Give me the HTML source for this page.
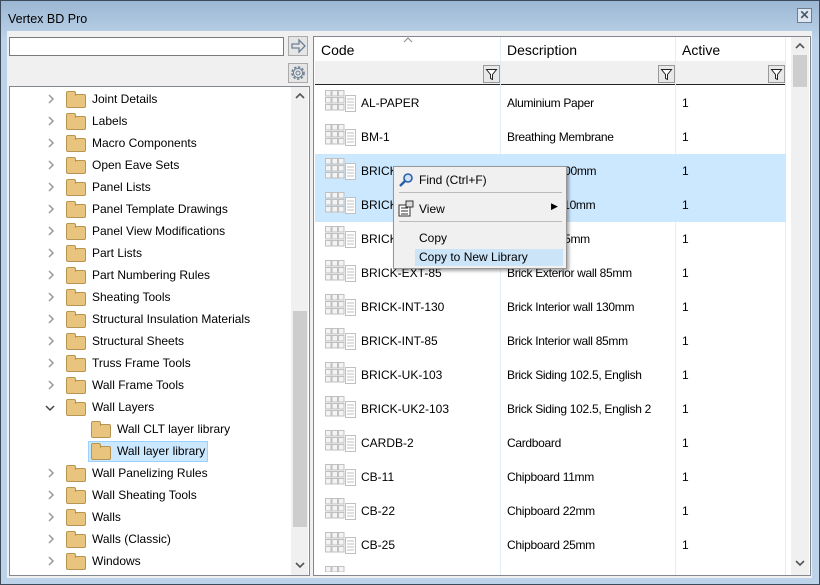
<!DOCTYPE html>
<html><head><meta charset="utf-8"><style>
*{box-sizing:border-box;margin:0;padding:0}
body{width:820px;height:585px;overflow:hidden;font-family:"Liberation Sans",sans-serif;font-size:12px;color:#000;position:relative;background:#bcd3ea}
.abs{position:absolute}
#win{left:0;top:0;width:820px;height:585px;border:1px solid #3c4a5a;background:linear-gradient(#9cb7d3,#bdd3ea 40px,#bdd3ea)}
#title{left:8px;top:12px;font-size:12.5px;color:#000}
#close{left:797px;top:8px;width:15px;height:15px;border:1px solid #6d7d90;background:#dfe8f2;font-size:12px;line-height:12px;text-align:center;color:#4a5868;font-weight:bold}
#body{left:7px;top:31px;width:805px;height:547px;background:#f0f0f0}
.btn{width:20px;height:20px;border:1px solid #aaa;background:#e5e5e5}
.tree{left:9px;top:86px;width:301px;height:490px;border:1px solid #828790;background:#fff}
.row{position:absolute;height:22px;line-height:22px;font-size:12px;white-space:nowrap}
.chev{position:absolute}
.fold{position:absolute;width:20px;height:14px;background:#e8c47e;border:1px solid #b79450;border-radius:2px}
.fold:before{content:"";position:absolute;left:-1px;top:-4px;width:8px;height:4px;background:#e8c47e;border:1px solid #b79450;border-bottom:none;border-radius:2px 2px 0 0}
.grid{left:313px;top:36px;width:498px;height:540px;border:1px solid #828790;background:#fff}
.g{position:absolute;font-size:12px;white-space:nowrap}
.filt{position:absolute;width:17px;height:18px;border:1px solid #999;background:#e8e8e8}
.menu{left:393px;top:166px;width:174px;height:103px;background:#f0f0f0;border:1px solid #979797;box-shadow:2px 2px 3px rgba(0,0,0,.35)}
</style></head><body>
<div id="win" class="abs"></div>
<div id="title" class="abs">Vertex BD Pro</div>
<div id="close" class="abs">✕</div>
<div id="body" class="abs"></div>
<div class="abs" style="left:9px;top:37px;width:275px;height:19px;border:1px solid #7a7a7a;background:#fff"></div>
<div class="abs btn" style="left:288px;top:36px"><svg width="18" height="18" style="position:absolute;left:0;top:0"><path d="M3 7h7V3l6 6-6 6v-4H3z" fill="none" stroke="#6d7f92" stroke-width="1.3"/></svg></div>
<div class="abs btn" style="left:288px;top:63px"><svg width="18" height="18" style="position:absolute;left:0;top:0"><circle cx="9" cy="9" r="6" fill="none" stroke="#6d7f92" stroke-width="1.6" stroke-dasharray="2.4 1.6"/><circle cx="9" cy="9" r="4.6" fill="none" stroke="#6d7f92" stroke-width="1"/><circle cx="9" cy="9" r="2" fill="none" stroke="#6d7f92" stroke-width="1"/></svg></div>

<div class="abs tree">
<div class="abs" style="left:281px;top:0;width:17px;height:488px;background:#f0f0f0"></div>
<div class="abs" style="left:283px;top:224px;width:14px;height:216px;background:#cdcdcd"></div>
<svg class="abs" style="left:285px;top:5px" width="10" height="8"><path d="M1 6l4-4 4 4" fill="none" stroke="#555" stroke-width="1.6"/></svg>
<svg class="abs" style="left:285px;top:474px" width="10" height="8"><path d="M1 2l4 4 4-4" fill="none" stroke="#555" stroke-width="1.6"/></svg>
</div>

<div id="tree"></div>

<div class="abs grid">
<div class="abs" style="left:1px;top:24px;width:471px;height:24px;background:#f0f0f0;border-bottom:1px solid #222"></div>
<div class="abs" style="left:186px;top:0;width:1px;height:538px;background:#e4edf6"></div>
<div class="abs" style="left:361px;top:0;width:1px;height:538px;background:#e4edf6"></div>
<div class="abs" style="left:471px;top:0;width:1px;height:538px;background:#e4edf6"></div>
<div class="abs" style="left:1px;top:117px;width:471px;height:68px;background:#cce8ff"></div>
<div class="abs" style="left:477px;top:0;width:18px;height:538px;background:#f0f0f0"></div>
<div class="abs" style="left:479px;top:18px;width:14px;height:32px;background:#cdcdcd"></div>
<svg class="abs" style="left:481px;top:5px" width="10" height="8"><path d="M1 6l4-4 4 4" fill="none" stroke="#555" stroke-width="1.6"/></svg>
<svg class="abs" style="left:481px;top:522px" width="10" height="8"><path d="M1 2l4 4 4-4" fill="none" stroke="#555" stroke-width="1.6"/></svg>
<div class="g" style="left:7px;top:5px;font-size:14px">Code</div>
<svg class="abs" style="left:89px;top:0" width="10" height="6"><path d="M1 5l4-4 4 4" fill="none" stroke="#888"/></svg>
<div class="g" style="left:193px;top:5px;font-size:14px">Description</div>
<div class="g" style="left:368px;top:5px;font-size:14px">Active</div>
<div class="filt" style="left:169px;top:28px"><svg width="15" height="16"><path d="M2.5 3.5h10l-4 5v5l-2-1v-4z" fill="#fff" stroke="#222"/></svg></div>
<div class="filt" style="left:344px;top:28px"><svg width="15" height="16"><path d="M2.5 3.5h10l-4 5v5l-2-1v-4z" fill="#fff" stroke="#222"/></svg></div>
<div class="filt" style="left:454px;top:28px"><svg width="15" height="16"><path d="M2.5 3.5h10l-4 5v5l-2-1v-4z" fill="#fff" stroke="#222"/></svg></div>
</div>
<div id="rows"></div>

<div class="abs menu">
<svg class="abs" style="left:4px;top:5px" width="16" height="16"><circle cx="10" cy="6" r="4" fill="#cfe3f7" stroke="#2a5fa8" stroke-width="1.6"/><path d="M7 9 2 14" stroke="#2a5fa8" stroke-width="2.4"/></svg>
<div class="g" style="left:25px;top:6px">Find (Ctrl+F)</div>
<div class="abs" style="left:5px;top:25px;width:163px;height:1px;background:#bbb"></div>
<svg class="abs" style="left:3px;top:33px" width="18" height="18"><rect x="2" y="5" width="11" height="11" fill="#fff" stroke="#333"/><path d="M4 8h7M4 11h7M4 14h7" stroke="#333"/><rect x="9" y="1" width="7" height="6" fill="#ddd" stroke="#333"/></svg>
<div class="g" style="left:25px;top:35px">View</div>
<div class="g" style="left:157px;top:34px;font-size:9px">&#9654;</div>
<div class="abs" style="left:5px;top:54px;width:163px;height:1px;background:#bbb"></div>
<div class="g" style="left:25px;top:64px">Copy</div>
<div class="abs" style="left:21px;top:82px;width:148px;height:17px;background:#cce4f7"></div>
<div class="g" style="left:25px;top:83px">Copy to New Library</div>
</div>

<script>
var t=[["Joint Details",0],["Labels",0],["Macro Components",0],["Open Eave Sets",0],["Panel Lists",0],["Panel Template Drawings",0],["Panel View Modifications",0],["Part Lists",0],["Part Numbering Rules",0],["Sheating Tools",0],["Structural Insulation Materials",0],["Structural Sheets",0],["Truss Frame Tools",0],["Wall Frame Tools",0],["Wall Layers",2],["Wall CLT layer library",1],["Wall layer library",3],["Wall Panelizing Rules",0],["Wall Sheating Tools",0],["Walls",0],["Walls (Classic)",0],["Windows",0]];
var h="";t.forEach(function(r,i){var y=88+i*22,k=r[1],fx=(k==1||k==3)?91:66;
if(k==0)h+='<svg class="chev" style="left:47px;top:'+(y+6)+'px" width="8" height="10"><path d="M2 1l4 4-4 4" fill="none" stroke="#999" stroke-width="1.5"/></svg>';
if(k==2)h+='<svg class="chev" style="left:45px;top:'+(y+8)+'px" width="10" height="8"><path d="M1 2l4 4 4-4" fill="none" stroke="#444" stroke-width="1.5"/></svg>';
if(k==3)h+='<div class="abs" style="left:88px;top:'+(y+1)+'px;width:120px;height:21px;background:#cce8ff;border:1px solid #99d1ff"></div>';
h+='<div class="fold" style="left:'+fx+'px;top:'+(y+6)+'px"></div><div class="row" style="left:'+(fx+26)+'px;top:'+y+'px">'+r[0]+'</div>';});
document.getElementById("tree").innerHTML=h;
var d=[["AL-PAPER","Aluminium Paper"],["BM-1","Breathing Membrane"],["BRICK-100","Brick wall 100mm"],["BRICK-110","Brick wall 110mm"],["BRICK-85","Brick wall 85mm"],["BRICK-EXT-85","Brick Exterior wall 85mm"],["BRICK-INT-130","Brick Interior wall 130mm"],["BRICK-INT-85","Brick Interior wall 85mm"],["BRICK-UK-103","Brick Siding 102.5, English"],["BRICK-UK2-103","Brick Siding 102.5, English 2"],["CARDB-2","Cardboard"],["CB-11","Chipboard 11mm"],["CB-22","Chipboard 22mm"],["CB-25","Chipboard 25mm"]];
var ic='<svg width="34" height="24"><g fill="#f4f4f4" stroke="#c0c0c0">';
for(var a=0;a<3;a++)for(var b=0;b<3;b++)ic+='<rect x="'+(0.5+b*6.5)+'" y="'+(0.5+a*7)+'" width="5.5" height="5.5"/>';
ic+='<rect x="20.5" y="5.5" width="10" height="16" fill="#fff"/><path d="M22 9h7M22 12h7M22 15h7M22 18h7" /></g></svg>';
var g="";d.forEach(function(r,i){var y=90+i*34;
g+='<div class="abs" style="left:325px;top:'+y+'px">'+ic+'</div><div class="g" style="left:361px;top:'+(y+6)+'px">'+r[0]+'</div><div class="g" style="left:507px;top:'+(y+6)+'px;letter-spacing:-0.3px">'+r[1]+'</div><div class="g" style="left:682px;top:'+(y+6)+'px">1</div>';});
g+='<div class="abs" style="left:325px;top:566px;width:20px;height:6px;overflow:hidden">'+ic+'</div>';
document.getElementById("rows").innerHTML=g;
</script>
</body></html>
